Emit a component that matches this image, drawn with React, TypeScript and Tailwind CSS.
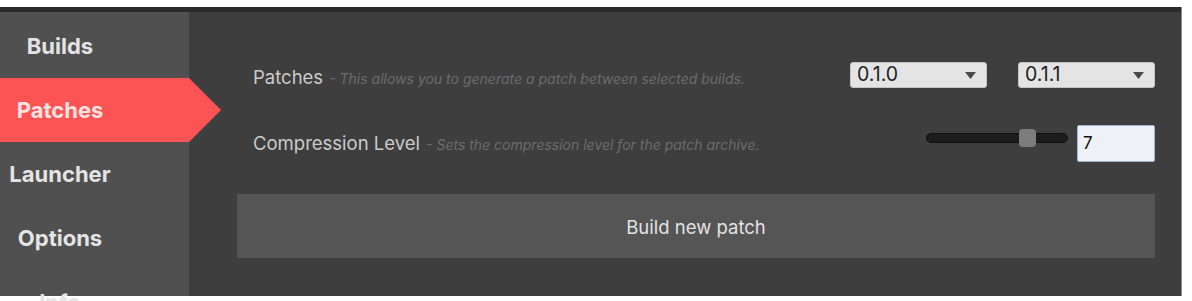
const navItems = ["Builds", "Patches", "Launcher", "Options", "Info"];

function Dropdown({ value }: { value: string }) {
  return (
    <div className="flex h-[26px] w-[137px] items-center justify-between rounded-[3px] border border-[#c4c4c4] bg-[#e4e4e4] pl-[6px] pr-[10px] text-[19.5px] leading-none text-[#222]">
      <span>{value}</span>
      <svg width="11" height="7" viewBox="0 0 11 7">
        <path d="M0 0 L11 0 L5.5 7 Z" fill="#4a4a4a" />
      </svg>
    </div>
  );
}

export default function App() {
  return (
    <div className="h-[301px] w-[1192px] overflow-hidden bg-white pt-[7px] pr-[10px]" style={{ fontFamily: "Inter, 'Noto Sans', sans-serif" }}>
      <div className="flex h-[289px] flex-col border-r border-[#8a8a8a] bg-[#3e3e3e]">
        <div className="h-[5px] shrink-0 bg-[#2a2a2a]" />
        <div className="flex min-h-0 flex-1">
          <div className="relative z-10 w-[189px] shrink-0 bg-[#505050] pt-[2px]">
            {navItems.map((item) => {
              const active = item === "Patches";
              return (
                <div key={item} className="relative h-[64px]">
                  {active && (
                    <div className="absolute inset-y-0 left-0 w-[221px] bg-[#fc5454] [clip-path:polygon(0_0,189px_0,221px_50%,189px_100%,0_100%)]" />
                  )}
                  <div className={`relative flex h-full w-[120px] items-center justify-center text-[22px] font-bold ${active ? "text-[#fde2e2]" : "text-[#e4e4e4]"}`}>
                    {item}
                  </div>
                </div>
              );
            })}
          </div>
          <div className="flex-1 pl-[48px] pr-[26px] pt-[50px]">
            <div className="flex h-[26px] items-center justify-between pl-[16px]">
              <div className="flex items-baseline pt-[6px]">
                <span className="text-[18.5px] text-[#cbcbcb]">Patches</span>
                <span className="ml-[6px] text-[14px] italic text-[#6c6c6c]">- This allows you to generate a patch between selected builds.</span>
              </div>
              <div className="flex gap-[31px]">
                <Dropdown value="0.1.0" />
                <Dropdown value="0.1.1" />
              </div>
            </div>
            <div className="mt-[37px] flex h-[37px] items-center justify-between pl-[16px]">
              <div className="flex items-baseline">
                <span className="text-[18.5px] text-[#cbcbcb]">Compression Level</span>
                <span className="ml-[6px] text-[14px] italic text-[#6c6c6c]">- Sets the compression level for the patch archive.</span>
              </div>
              <div className="flex items-center gap-[9px]">
                <div className="relative mt-[-12px] h-[10px] w-[142px] rounded-full border border-[#0e0e0e] bg-[#1c1c1c]">
                  <div className="absolute top-[-5px] left-[92px] h-[18px] w-[17px] rounded-[4px] bg-[#7c7c7c]" />
                </div>
                <div className="flex h-[37px] w-[78px] items-center rounded-[2px] border border-[#9fb4d0] bg-[#eef2f8] pl-[5px] text-[17px] text-[#111]">
                  7
                </div>
              </div>
            </div>
            <div className="mt-[32px] flex h-[64px] items-center justify-center bg-[#555555] pt-[4px] text-[18.5px] text-[#e2e2e2]">
              Build new patch
            </div>
          </div>
        </div>
      </div>
    </div>
  );
}
